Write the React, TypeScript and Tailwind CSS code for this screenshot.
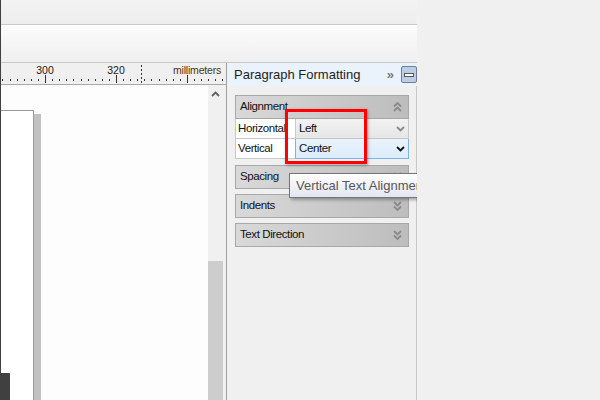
import React from "react";

const font = { fontFamily: '"Liberation Sans", Arial, sans-serif' };

const DoubleChevron = ({ up, color = "#8a8a8a" }: { up?: boolean; color?: string }) => (
  <svg width="9" height="10" viewBox="0 0 9 10" className={up ? "rotate-180" : ""}>
    <path d="M1 1l3.5 3.5L8 1M1 5.5L4.5 9 8 5.5" fill="none" stroke={color} strokeWidth="1.8" />
  </svg>
);

const Chevron = ({ color }: { color: string }) => (
  <svg width="9" height="6" viewBox="0 0 9 6">
    <path d="M1 1l3.5 3.5L8 1" fill="none" stroke={color} strokeWidth="1.8" />
  </svg>
);

const Ruler = () => {
  const ticks: number[] = [];
  for (let x = 44 - 7.1 * 6; x < 222; x += 7.1) ticks.push(Math.round(x) + 0.5);
  return (
    <svg width="225" height="21" className="block">
      {ticks.map((x, i) => {
        const major = Math.abs(((x - 44.5) / 7.1) % 10) < 0.2;
        return (
          <line
            key={i}
            x1={x}
            x2={x}
            y1={major ? 12 : 16}
            y2={major ? 20 : 18}
            stroke="#333"
            strokeWidth="1"
          />
        );
      })}
      <line x1="140.5" x2="140.5" y1="2" y2="20" stroke="#333" strokeDasharray="2 2" />
      <text x="44" y="11" textAnchor="middle" fontSize="10.5" fill="#1a1a1a" style={font}>300</text>
      <text x="115" y="11" textAnchor="middle" fontSize="10.5" fill="#1a1a1a" style={font}>320</text>
      <text x="220" y="11" textAnchor="end" fontSize="10.5" letterSpacing="-0.2" fill="#4a3516" style={font}>millimeters</text>
    </svg>
  );
};

const SectionHeader = ({ title, up }: { title: string; up?: boolean }) => (
  <div className="flex h-[24px] items-center justify-between border border-[#a8a8a8] bg-gradient-to-r from-[#d9d9d9] to-[#bdbdbd] pl-[4px] pr-[6px] text-[11.5px] tracking-[-0.4px] text-[#111]">
    <span>{title}</span>
    <DoubleChevron up={up} />
  </div>
);

export default function App() {
  return (
    <div className="relative flex h-[400px] w-[600px] overflow-hidden bg-[#f0f0f0]" style={font}>
      <div className="flex w-[417px] flex-col border-l border-[#404040]">
        <div className="h-[24px] bg-gradient-to-b from-[#f3f3f3] to-[#ededed]" />
        <div className="h-[39px] border-y border-[#c9c9c9] bg-gradient-to-b from-[#fcfcfc] to-[#efefef]" />
        <div className="flex flex-1">
          <div className="flex w-[225px] flex-col">
            <div className="h-[22px] border-b border-[#a9a9a9] bg-[#f0f0f0]">
              <Ruler />
            </div>
            <div className="flex flex-1">
              <div className="relative flex-1 bg-[#fdfdfd]">
                <div className="mt-[25px] flex h-full">
                  <div className="h-full w-[33px] border-r border-t border-[#9a9a9a] bg-white" />
                  <div className="mt-[4px] h-full w-[7px] bg-[#c2c2c2]" />
                </div>
                <div className="absolute bottom-0 left-[-1px] h-[27px] w-[10px] bg-[#404040]" />
              </div>
              <div className="flex w-[15px] flex-col bg-[#f0f0f0]">
                <div className="flex h-[17px] items-center justify-center">
                  <svg width="9" height="6" viewBox="0 0 9 6">
                    <path d="M1 5l3.5-3.5L8 5" fill="none" stroke="#606060" strokeWidth="1.8" />
                  </svg>
                </div>
                <div className="flex-1" />
                <div className="h-[139px] bg-[#cdcdcd]" />
              </div>
              <div className="w-[3px] bg-[#f0f0f0]" />
            </div>
          </div>
          <div className="flex w-[191px] flex-col border-l border-[#a0a0a0]">
            <div className="flex h-[23px] items-center justify-between bg-[#eaf2fb] pl-[7px]">
              <span className="text-[13px] text-[#1e1e1e]">Paragraph Formatting</span>
              <div className="flex items-center gap-[7px]">
                <span className="text-[13px] leading-none font-bold text-[#777]">»</span>
                <div className="flex h-[17px] w-[16px] items-center justify-center rounded-[2px] border border-[#6e7f99] bg-[#bccde5]">
                  <div className="h-[4px] w-[10px] border border-[#555] bg-white" />
                </div>
              </div>
            </div>
            <div className="flex flex-1 flex-col gap-[5px] border-r border-[#c8c8c8] bg-[#f0f0f0] pl-[8px] pr-[7px] pt-[9px]">
              <div className="flex flex-col">
                <SectionHeader title="Alignment" up />
                <div className="flex h-[20px] text-[11.5px] tracking-[-0.4px] text-[#111]">
                  <div className="flex w-[60px] items-center overflow-hidden border-b border-l border-[#c8c8c8] bg-white pl-[2px] whitespace-nowrap">Horizontal</div>
                  <div className="flex flex-1 items-center justify-between border border-t-0 border-[#c8c8c8] bg-gradient-to-b from-[#f2f2f2] to-[#e6e6e6] pl-[3px] pr-[3px]">
                    <span>Left</span>
                    <Chevron color="#8a8a8a" />
                  </div>
                </div>
                <div className="flex h-[20px] text-[11.5px] tracking-[-0.4px] text-[#111]">
                  <div className="flex w-[60px] items-center border-b border-l border-[#c8c8c8] bg-white pl-[2px]">Vertical</div>
                  <div className="flex flex-1 items-center justify-between border border-t-0 border-[#7eb4ea] bg-gradient-to-b from-[#eaf3fc] to-[#dcecfc] pl-[3px] pr-[3px]">
                    <span>Center</span>
                    <Chevron color="#111" />
                  </div>
                </div>
              </div>
              <div className="mt-[1px]"><SectionHeader title="Spacing" /></div>
              <SectionHeader title="Indents" />
              <SectionHeader title="Text Direction" />
            </div>
          </div>
        </div>
      </div>
      <div className="flex-1" />

      <div className="absolute left-[285px] top-[109px] h-[55px] w-[82px] border-[3px] border-[#ff0000] shadow-[1px_1px_3px_rgba(0,0,0,0.35)]" />

      <div className="absolute left-[289px] top-[173px] flex h-[25px] w-[140px] items-center border border-[#767676] bg-gradient-to-b from-white to-[#e4e5f0] pl-[6px] text-[13px] whitespace-nowrap text-[#575757] shadow-[2px_2px_3px_rgba(0,0,0,0.3)]">
        Vertical Text Alignment
      </div>
      <div className="absolute left-[417px] top-0 h-[400px] w-[183px] bg-[#f0f0f0]" />
    </div>
  );
}
